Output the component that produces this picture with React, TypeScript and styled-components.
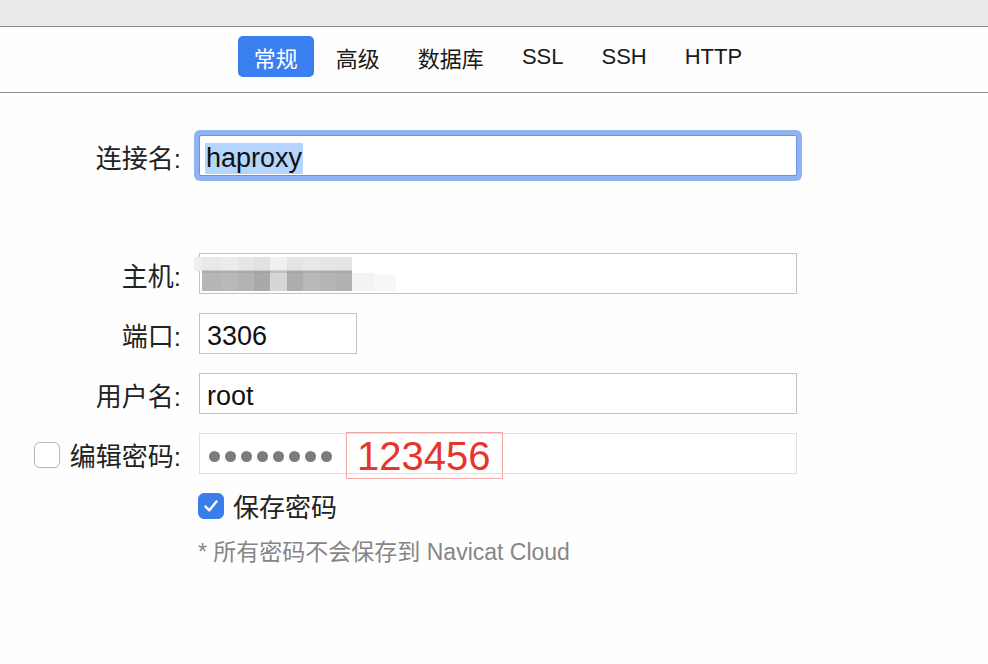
import React from 'react';
import styled, { createGlobalStyle } from 'styled-components';

const GlobalStyle = createGlobalStyle`
  html, body {
    margin: 0;
    padding: 0;
    background: #fefefe;
  }
  body {
    font-family: "Liberation Sans", "Noto Sans CJK SC", sans-serif;
    color: #1e1e1e;
  }
`;

const Window = styled.div`
  width: 988px;
  height: 664px;
  overflow: hidden;
  background: #fefefe;
`;

const TitleStrip = styled.div`
  height: 26px;
  background: #ebebeb;
  border-bottom: 1px solid #8c8c8c;
`;

const TabBar = styled.div`
  height: 66px;
  box-sizing: border-box;
  padding: 9px 0 0 8px;
  display: flex;
  justify-content: center;
  align-items: flex-start;
  gap: 6px;
  border-bottom: 1px solid #8c8c8c;
`;

const Tab = styled.div<{ $active?: boolean }>`
  height: 41px;
  padding: 1px 16px 0;
  box-sizing: border-box;
  display: flex;
  align-items: center;
  border-radius: 5px;
  font-size: 22px;
  background: ${(p) => (p.$active ? '#3a7ff0' : 'transparent')};
  color: ${(p) => (p.$active ? '#ffffff' : '#1a1a1a')};
`;

const Form = styled.div`
  padding-top: 42px;
  display: flex;
  flex-direction: column;
`;

const Row = styled.div<{ $top?: number }>`
  display: flex;
  align-items: center;
  margin-top: ${(p) => p.$top ?? 0}px;
`;

const Label = styled.div`
  width: 181px;
  margin-right: 18px;
  padding-top: 2px;
  display: flex;
  justify-content: flex-end;
  align-items: center;
  gap: 10px;
  font-size: 26px;
  color: #222;
  white-space: nowrap;
`;

const Field = styled.div<{ $width?: number; $faint?: boolean; $focused?: boolean }>`
  position: relative;
  box-sizing: border-box;
  width: ${(p) => p.$width ?? 598}px;
  height: 41px;
  padding: 5px 0 0 7px;
  display: flex;
  align-items: center;
  background: #fff;
  border: 1px solid ${(p) => (p.$focused ? '#6d91e2' : p.$faint ? '#e0e0e0' : '#c2c2c2')};
  box-shadow: ${(p) => (p.$focused ? '0 0 0 5px #92b3f1' : 'none')};
  border-radius: ${(p) => (p.$focused ? '2px' : '0')};
  font-size: 27px;
  color: #111;
`;

const Selected = styled.span`
  background: #b4d5fe;
  line-height: 31px;
  margin-left: -2px;
  padding: 0 1px;
`;

const Mosaic = styled.svg`
  margin: -4px 0 0 -13px;
  display: block;
`;

const Dots = styled.div`
  display: flex;
  gap: 5px;
  padding-left: 2px;
`;

const Dot = styled.span`
  width: 11px;
  height: 11px;
  border-radius: 50%;
  background: #7b7b7b;
`;

const RevealTag = styled.div`
  position: absolute;
  left: 146px;
  top: -2px;
  width: 157px;
  height: 47px;
  box-sizing: border-box;
  border: 1px solid #f1a9a6;
  padding: 2px 0 0 10px;
  display: flex;
  align-items: center;
  font-size: 40px;
  color: #e8352b;
`;

const Box = styled.span<{ $checked?: boolean }>`
  width: 26px;
  height: 26px;
  box-sizing: border-box;
  border-radius: 6px;
  display: inline-flex;
  align-items: center;
  justify-content: center;
  background: ${(p) => (p.$checked ? '#3b7deb' : '#ffffff')};
  border: 1px solid ${(p) => (p.$checked ? '#3b7deb' : '#b9b9b9')};
  box-shadow: ${(p) => (p.$checked ? 'none' : '0 1px 1px rgba(0,0,0,0.05)')};
`;

const SaveRow = styled.div`
  margin: 13px 0 0 198px;
  display: flex;
  align-items: center;
  gap: 9px;
  font-size: 26px;
  color: #222;
`;

const Note = styled.div`
  margin: 9px 0 0 198px;
  font-size: 23px;
  color: #868686;
`;

const tabs = ['常规', '高级', '数据库', 'SSL', 'SSH', 'HTTP'];

// blurred host address tiles: [x, width, top colour, bottom colour]
const tiles: [number, number, string, string][] = [
  [8, 20, '#e9e9e9', '#b6b6b6'],
  [28, 16, '#ececec', '#b9b9b9'],
  [44, 16, '#e6e6e6', '#b3b3b3'],
  [60, 16, '#e2e2e2', '#a9a9a9'],
  [76, 17, '#f0f0f0', '#d6d6d6'],
  [93, 16, '#e4e4e4', '#adadad'],
  [109, 16, '#e8e8e8', '#b9b9b9'],
  [125, 17, '#e6e6e6', '#b5b5b5'],
  [142, 16, '#e4e4e4', '#b1b1b1'],
];

function HostMosaic() {
  return (
    <Mosaic width="210" height="38" viewBox="0 0 210 38">
      <rect x="0" y="2" width="8" height="14" fill="#efefef" />
      {tiles.map(([x, w, top, bottom]) => (
        <g key={x}>
          <rect x={x} y="2" width={w} height="14" fill={top} />
          <rect x={x} y="16" width={w} height="20" fill={bottom} />
          <rect x={x} y="15" width={w} height="3" fill="#999" opacity="0.35" />
        </g>
      ))}
      <rect x="158" y="18" width="22" height="18" fill="#f3f3f3" />
      <rect x="180" y="20" width="22" height="16" fill="#f7f7f7" />
    </Mosaic>
  );
}

function Check() {
  return (
    <svg width="18" height="18" viewBox="0 0 18 18">
      <path d="M3.5 9.5 L7.3 13.3 L14.5 4.5" fill="none" stroke="#fff" strokeWidth="2.4" strokeLinecap="round" strokeLinejoin="round" />
    </svg>
  );
}

export default function App() {
  return (
    <Window>
      <GlobalStyle />
      <TitleStrip />
      <TabBar>
        {tabs.map((t, i) => (
          <Tab key={t} $active={i === 0}>{t}</Tab>
        ))}
      </TabBar>
      <Form>
        <Row>
          <Label>连接名:</Label>
          <Field $focused>
            <Selected>haproxy</Selected>
          </Field>
        </Row>
        <Row $top={77}>
          <Label>主机:</Label>
          <Field>
            <HostMosaic />
          </Field>
        </Row>
        <Row $top={19}>
          <Label>端口:</Label>
          <Field $width={158}>3306</Field>
        </Row>
        <Row $top={19}>
          <Label>用户名:</Label>
          <Field>root</Field>
        </Row>
        <Row $top={19}>
          <Label>
            <Box />
            编辑密码:
          </Label>
          <Field $faint>
            <Dots>
              {Array.from({ length: 8 }).map((_, i) => (
                <Dot key={i} />
              ))}
            </Dots>
            <RevealTag>123456</RevealTag>
          </Field>
        </Row>
        <SaveRow>
          <Box $checked>
            <Check />
          </Box>
          保存密码
        </SaveRow>
        <Note>* 所有密码不会保存到 Navicat Cloud</Note>
      </Form>
    </Window>
  );
}
